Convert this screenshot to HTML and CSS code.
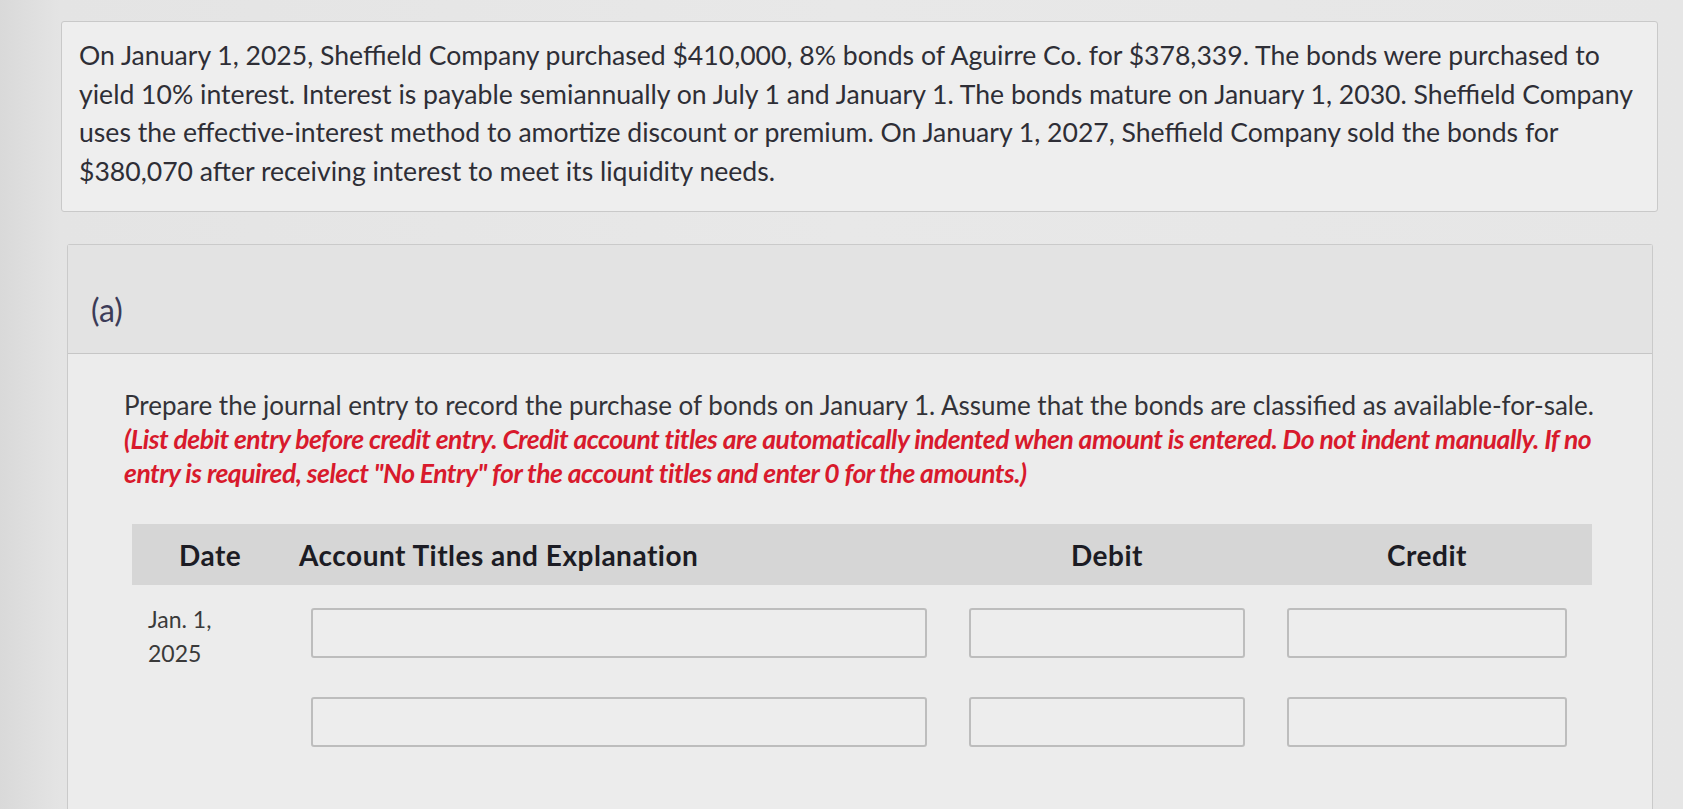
FILE: index.html
```html
<!DOCTYPE html>
<html lang="en">
<head>
<meta charset="utf-8">
<title>Journal entry</title>
<link rel="stylesheet" href="styles.css">
</head>
<body>
<div class="page">
  <section class="problem">
    <p>On January 1, 2025, Sheffield Company purchased $410,000, 8% bonds of Aguirre Co. for $378,339. The bonds were purchased to yield 10% interest. Interest is payable semiannually on July 1 and January 1. The bonds mature on January 1, 2030. Sheffield Company uses the effective-interest method to amortize discount or premium. On January 1, 2027, Sheffield Company sold the bonds for $380,070 after receiving interest to meet its liquidity needs.</p>
  </section>

  <section class="part">
    <div class="part-head">(a)</div>
    <div class="part-body">
      <p class="prompt">Prepare the journal entry to record the purchase of bonds on January 1. Assume that the bonds are classified as available-for-sale. <em class="note">(List debit entry before credit entry. Credit account titles are automatically indented when amount is entered. Do not indent manually. If no entry is required, select "No Entry" for the account titles and enter 0 for the amounts.)</em></p>

      <div class="journal">
        <div class="jhead">
          <div class="h-date">Date</div>
          <div class="h-acct">Account Titles and Explanation</div>
          <div class="h-debit">Debit</div>
          <div class="h-credit">Credit</div>
        </div>
        <div class="jrow">
          <div class="date">Jan. 1,<br>2025</div>
          <div class="cell acct"><input class="box" type="text"></div>
          <div class="cell debit"><input class="box" type="text"></div>
          <div class="cell credit"><input class="box" type="text"></div>
        </div>
        <div class="jrow second">
          <div class="date"></div>
          <div class="cell acct"><input class="box" type="text"></div>
          <div class="cell debit"><input class="box" type="text"></div>
          <div class="cell credit"><input class="box" type="text"></div>
        </div>
      </div>
    </div>
  </section>
</div>
</body>
</html>
```

FILE: styles.css
```css
* { box-sizing: border-box; }

html, body {
  margin: 0;
  height: 100%;
  overflow: hidden;
}

body {
  background: linear-gradient(90deg, #d9d9d9 0px, #e4e4e4 60px, #e8e8e8 50%, #e6e6e6 100%);
  font-family: Lato, "Open Sans", sans-serif;
  color: #333333;
}

.page {
  padding: 21px 25px 0 61px;
}

.problem {
  width: 1597px;
  height: 191px;
  border: 1px solid #c9c9c9;
  border-radius: 3px;
  background: #eeeeee;
  padding: 14px 0 0 17px;
}

.problem p {
  margin: 0;
  font-size: 26.6px;
  line-height: 38.7px;
  color: #2e2e36;
}

.part {
  margin: 32px 0 0 6px;
  width: 1586px;
  border: 1px solid #cacaca;
  border-bottom: none;
  border-radius: 3px 3px 0 0;
  background: #ececec;
}

.part-head {
  height: 109px;
  background: #e3e3e3;
  border-bottom: 1px solid #c6c6c6;
  padding: 46px 0 0 23px;
  font-size: 32px;
  line-height: 38px;
  color: #3c3c58;
}

.part-body {
  min-height: 460px;
  padding: 34px 0 0 56px;
}

.prompt {
  margin: 0;
  max-width: 1500px;
  font-size: 26px;
  line-height: 34px;
  color: #333338;
}

.note {
  display: block;
  font-size: 26.5px;
  font-style: italic;
  font-weight: 700;
  color: #d81a2c;
  letter-spacing: -0.5px;
}

.journal {
  margin: 34px 0 0 8px;
  width: 1460px;
}

.jhead,
.jrow {
  display: grid;
  grid-template-columns: 167px 628px 318px 322px;
}

.jhead {
  height: 61px;
  background: #d6d6d6;
  align-items: center;
  font-weight: 700;
  font-size: 28px;
  letter-spacing: 0.5px;
  color: #1c1c24;
}

.h-date { padding-left: 47px; }
.h-debit { padding-left: 42px; text-align: center; }
.h-credit { padding-left: 42px; text-align: center; }

.jrow {
  grid-auto-rows: 50px;
  padding-top: 23px;
}

.jrow.second {
  padding-top: 39px;
}

.date {
  padding: 0 0 0 16px;
  margin-top: -6px;
  font-size: 23px;
  line-height: 34px;
  color: #3a3a3a;
}

.cell {
  display: flex;
}

.acct { padding-left: 12px; }
.debit { padding-left: 42px; }
.credit { padding-left: 42px; }

.box {
  width: 100%;
  height: 50px;
  border: 2px solid #bdbdbd;
  border-radius: 3px;
  background: #ededed;
  font: inherit;
}
```
